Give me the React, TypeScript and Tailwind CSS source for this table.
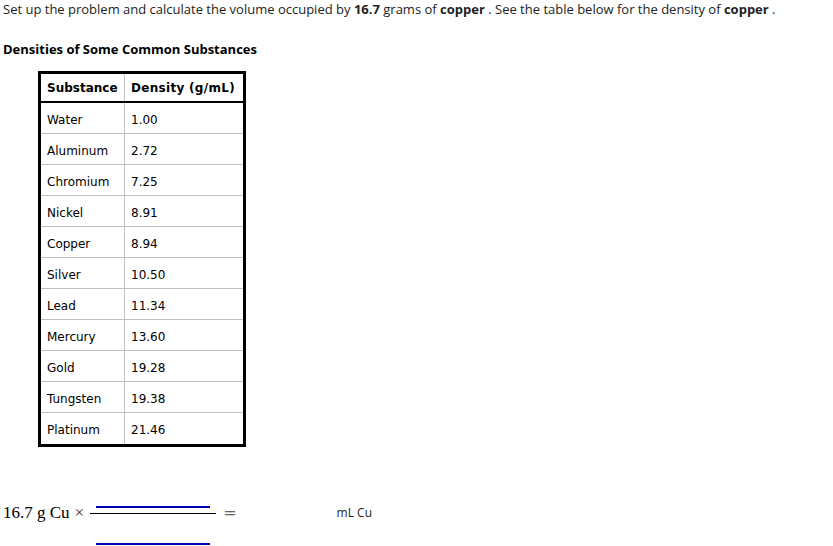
import * as React from "react";

const rows: [string, string][] = [
  ["Water", "1.00"],
  ["Aluminum", "2.72"],
  ["Chromium", "7.25"],
  ["Nickel", "8.91"],
  ["Copper", "8.94"],
  ["Silver", "10.50"],
  ["Lead", "11.34"],
  ["Mercury", "13.60"],
  ["Gold", "19.28"],
  ["Tungsten", "19.38"],
  ["Platinum", "21.46"],
];

export default function App() {
  return (
    <div className="w-[833px] h-[546px] bg-white text-black overflow-hidden font-['Open_Sans',sans-serif]">
      {/* Prompt */}
      <p className="pl-[3px] text-[13px] leading-[18px] text-[#222]">
        Set up the problem and calculate the volume occupied by{" "}
        <b>16.7</b> grams of <b>copper</b> . See the table below for the
        density of <b>copper</b> .
      </p>

      <h3 className="pl-[3px] mt-[22px] text-[13px] leading-[18px] font-bold">
        Densities of Some Common Substances
      </h3>

      {/* Table */}
      <div className="ml-[38px] mt-[13px] w-[208px] border-[3px] border-black font-['DejaVu_Sans',sans-serif] text-[12px]">
        <div className="flex h-[29px] items-center border-b-2 border-black font-bold">
          <div className="w-[84px] h-full flex items-center pl-[6px] border-r border-[#c0c0c0]">
            Substance
          </div>
          <div className="flex-1 pl-[6px] tracking-[0.3px]">Density (g/mL)</div>
        </div>
        {rows.map(([name, d], i) => (
          <div
            key={name}
            className={`flex h-[31px] items-center ${
              i < rows.length - 1 ? "border-b border-[#c0c0c0]" : ""
            }`}
          >
            <div className="w-[84px] h-full flex items-center pl-[6px] pt-[3px] border-r border-[#c0c0c0]">
              {name}
            </div>
            <div className="flex-1 pl-[6px] pt-[3px]">{d}</div>
          </div>
        ))}
      </div>

      {/* Equation */}
      <div className="mt-[53px] flex items-start">
        <span className="pl-[3px] font-['Liberation_Serif',serif] text-[17px] font-medium leading-[26px] whitespace-nowrap">
          16.7 g Cu
        </span>
        <span className="ml-[5px] font-['Liberation_Serif',serif] text-[17px] leading-[26px] text-[#333]">
          ×
        </span>
        <div className="ml-[6px] mt-[6px] flex flex-col items-center w-[126px]">
          <div className="w-[114px] h-[2px] bg-[#0000bb]" />
          <div className="mt-[5px] w-full h-px bg-black" />
          <div className="mt-[29px] w-[114px] h-[2px] bg-[#0000bb]" />
        </div>
        <span className="ml-[7px] text-[16px] leading-[26px] text-[#666] font-['DejaVu_Sans',sans-serif]">
          =
        </span>
        <span className="ml-[100px] text-[12px] leading-[26px] text-[#222]">
          mL Cu
        </span>
      </div>
    </div>
  );
}
